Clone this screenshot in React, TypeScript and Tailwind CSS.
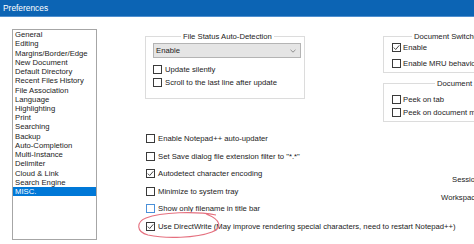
import React from "react";

const categories = [
  "General",
  "Editing",
  "Margins/Border/Edge",
  "New Document",
  "Default Directory",
  "Recent Files History",
  "File Association",
  "Language",
  "Highlighting",
  "Print",
  "Searching",
  "Backup",
  "Auto-Completion",
  "Multi-Instance",
  "Delimiter",
  "Cloud & Link",
  "Search Engine",
  "MISC.",
];

function Box({ checked = false, focus = false }: { checked?: boolean; focus?: boolean }) {
  return (
    <span
      className={
        "w-[9px] h-[9px] shrink-0 bg-white flex items-center justify-center border " +
        (focus ? "border-[#4a90d9]" : "border-[#3a3a3a]")
      }
    >
      {checked && (
        <svg width="7" height="7" viewBox="0 0 7 7">
          <polyline points="0.8,3.6 2.7,5.5 6.3,1.3" fill="none" stroke="#333" strokeWidth="0.9" />
        </svg>
      )}
    </span>
  );
}

function Check({
  label,
  checked,
  focus,
  gap = "gap-[3px]",
  h,
}: {
  label: string;
  checked?: boolean;
  focus?: boolean;
  gap?: string;
  h: string;
}) {
  return (
    <div className={"flex items-center whitespace-nowrap " + gap + " " + h}>
      <Box checked={checked} focus={focus} />
      <span>{label}</span>
    </div>
  );
}

function Group({
  title,
  titleLeft,
  className,
  children,
}: {
  title: string;
  titleLeft: string;
  className: string;
  children: React.ReactNode;
}) {
  return (
    <div className={"relative border border-[#dcdcdc] shrink-0 " + className}>
      <span
        className={
          "absolute top-[-5.5px] px-[2px] bg-white leading-[9px] whitespace-nowrap " + titleLeft
        }
      >
        {title}
      </span>
      {children}
    </div>
  );
}

export default function App() {
  return (
    <div className="w-[474px] h-[244px] overflow-hidden bg-white text-[#1b1b1b] font-['Liberation_Sans',Arial,sans-serif] text-[7.7px] leading-[9px]">
      {/* Title bar */}
      <div className="h-[17px] bg-[#0c64b4] border-b border-[#4f8fcf] flex items-center pl-[3px] text-white text-[8.4px]">
        Preferences
      </div>

      <div className="flex">
        {/* Category list */}
        <div className="ml-[12px] mt-[12px] w-[85px] h-[211px] shrink-0 border border-[#a6a6a6] pt-[0px]">
          {categories.map((c) => (
            <div
              key={c}
              className={
                "h-[9.24px] flex items-center pl-[2px] whitespace-nowrap " +
                (c === "MISC." ? "bg-[#0078d7] text-white" : "")
              }
            >
              {c}
            </div>
          ))}
        </div>

        {/* Settings */}
        <div className="flex-1 pl-[48px] pt-[19px]">
          <div className="flex gap-[78px]">
            <Group title="File Status Auto-Detection" titleLeft="left-[35px]" className="w-[160px] h-[63px] pl-[7px] pt-[6px]">
              <div className="w-[148px] h-[15px] bg-[#e5e5e5] border border-[#b4b4b4] flex items-center justify-between pl-[2px] pr-[4px]">
                <span>Enable</span>
                <svg width="6" height="4" viewBox="0 0 6 4">
                  <polyline points="0.5,0.8 3,3.2 5.5,0.8" fill="none" stroke="#777" strokeWidth="0.8" />
                </svg>
              </div>
              <div className="mt-[5.25px]">
                <Check label="Update silently" h="h-[12.5px]" />
                <Check label="Scroll to the last line after update" h="h-[12.5px]" />
              </div>
            </Group>

            <div className="flex flex-col gap-[10px]">
              <Group title="Document Switcher" titleLeft="left-[28px]" className="w-[140px] h-[37px] pl-[8px] pt-[2.5px]">
                <Check label="Enable" checked gap="gap-[2px]" h="h-[16px]" />
                <Check label="Enable MRU behavior" gap="gap-[2px]" h="h-[16px]" />
              </Group>
              <Group title="Document Peeker" titleLeft="left-[51px]" className="w-[140px] h-[39px] pl-[8px] pt-[9px]">
                <Check label="Peek on tab" gap="gap-[2px]" h="h-[13px]" />
                <Check label="Peek on document map" gap="gap-[2px]" h="h-[13px]" />
              </Group>
            </div>
          </div>

          <div className="flex mt-[7.7px] ml-[1px]">
            <div className="w-[240px] shrink-0 flex flex-col">
              <Check label="Enable Notepad++ auto-updater" h="h-[17.6px]" />
              <Check label={'Set Save dialog file extension filter to "*.*"'} h="h-[17.6px]" />
              <Check label="Autodetect character encoding" checked h="h-[17.6px]" />
              <Check label="Minimize to system tray" h="h-[17.6px]" />
              <Check label="Show only filename in title bar" focus h="h-[17.6px]" />
              <div className="relative">
                <Check
                  label="Use DirectWrite (May improve rendering special characters, need to restart Notepad++)"
                  checked
                  h="h-[17.6px]"
                />
                <svg
                  className="absolute left-[-10px] top-[-7.7px] pointer-events-none"
                  width="90"
                  height="30"
                  viewBox="0 0 90 30"
                >
                  <path
                    d="M80 5 C60 1, 25 2, 10 8 C0 12, 0 22, 12 25 C30 29, 60 28, 76 22 C86 18, 86 10, 70 4"
                    fill="none"
                    stroke="#e5707f"
                    strokeWidth="1.1"
                  />
                </svg>
              </div>
            </div>
            <div className="w-[122px] shrink-0 text-right whitespace-nowrap pt-[45.3px]">
              <div className="h-[9px]">Session file ext.:</div>
              <div className="h-[9px] mt-[9.5px]">Workspace file ext.:</div>
            </div>
          </div>
        </div>
      </div>
    </div>
  );
}
